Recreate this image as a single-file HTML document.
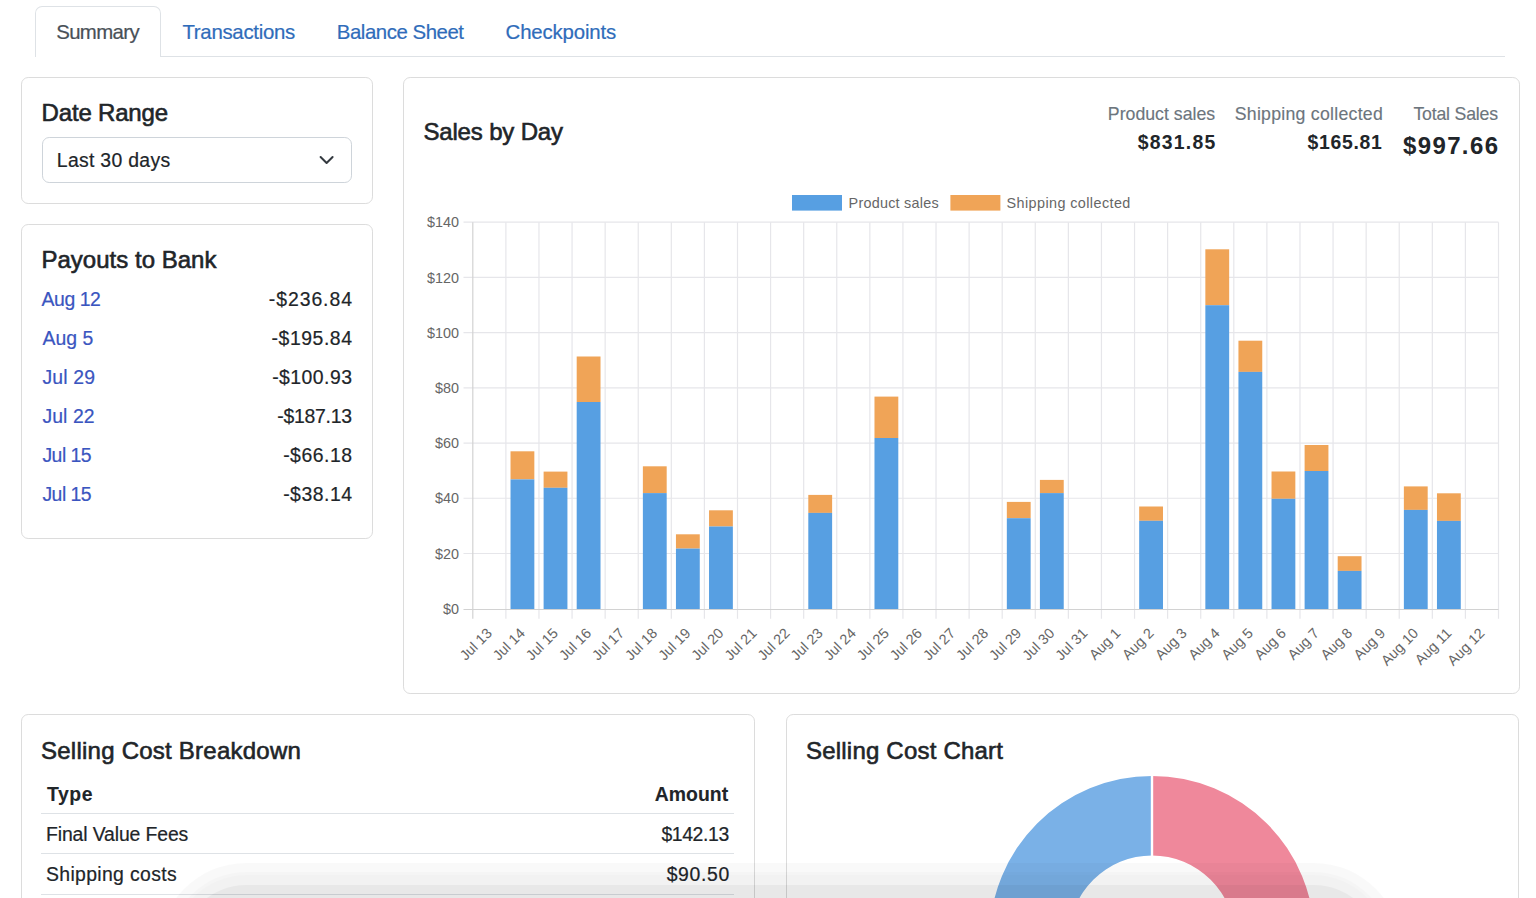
<!DOCTYPE html>
<html lang="en"><head><meta charset="utf-8"><title>Summary</title>
<style>
html,body{margin:0;padding:0;background:#fff;width:1536px;height:898px;overflow:hidden;position:relative;font-family:"Liberation Sans",sans-serif;}
.card{position:absolute;box-sizing:border-box;border:1.2px solid #dcdcdc;border-radius:7.2px;background:#fff;}
.navline{position:absolute;left:35px;top:55.6px;width:1470px;height:1.2px;background:#dee2e6;}
.tabact{position:absolute;left:35.4px;top:6px;width:125.4px;height:51px;box-sizing:border-box;border:1.2px solid #dee2e6;border-bottom:none;border-radius:7.2px 7.2px 0 0;background:#fff;}
.sel{position:absolute;left:41.5px;top:137px;width:310px;height:45.6px;box-sizing:border-box;border:1.2px solid #ced4da;border-radius:7.2px;}
.tline{position:absolute;left:40.9px;width:693.2px;height:1.2px;background:#dee2e6;}
svg.ov{position:absolute;left:0;top:0;}
.sh{position:absolute;height:300px;}
.yl,.xl{font-size:14.4px;fill:#666;font-family:"Liberation Sans",sans-serif;}
.tab{font-size:20.4px;fill:#2f6cba;stroke:#2f6cba;stroke-width:0.2px;font-family:"Liberation Sans",sans-serif;}
.tab.act{fill:#495057;stroke:#495057;}
.h5{font-size:24px;fill:#212529;stroke:#212529;stroke-width:0.6px;font-family:"Liberation Sans",sans-serif;}
.body{font-size:19.4px;fill:#212529;stroke:#212529;stroke-width:0.2px;font-family:"Liberation Sans",sans-serif;}
.b{font-weight:bold;stroke-width:0.1px;}
.lnk{fill:#3a55c0;stroke:#3a55c0;}
.muted{font-size:17.7px;fill:#6c757d;stroke:#6c757d;stroke-width:0.15px;font-family:"Liberation Sans",sans-serif;}
.stat{font-size:19.4px;font-weight:bold;fill:#212529;font-family:"Liberation Sans",sans-serif;}
.stat.big{font-size:24px;}
.leg{font-size:14.4px;fill:#666;font-family:"Liberation Sans",sans-serif;}

</style></head><body>
<nav class="navline"></nav>
<div class="tabact"></div>
<div class="card" style="left:20.6px;top:76.6px;width:352px;height:127px;"></div>
<div class="sel"></div>
<div class="card" style="left:20.6px;top:224px;width:352px;height:314.5px;"></div>
<div class="card" style="left:402.6px;top:76.6px;width:1117px;height:617px;"></div>
<div class="card" style="left:20.6px;top:714px;width:734.6px;height:300px;"></div>
<div class="card" style="left:785.6px;top:714px;width:733.6px;height:300px;"></div>
<div class="tline" style="top:813px;"></div>
<div class="tline" style="top:853.1px;"></div>
<div class="tline" style="top:893.9px;"></div>
<svg class="ov" width="1536" height="898" viewBox="0 0 1536 898">
<polyline points="320.6,157 326.6,163 332.6,157" fill="none" stroke="#343a40" stroke-width="2" stroke-linecap="round" stroke-linejoin="round"/>
<rect x="792" y="195" width="50" height="15.6" fill="#579fe2"/>
<rect x="950.4" y="195" width="50" height="15.6" fill="#f0a457"/>
<line x1="463.5" y1="553.49" x2="1498.5" y2="553.49" stroke="#e6e6ea" stroke-width="1.2"/>
<line x1="463.5" y1="498.27" x2="1498.5" y2="498.27" stroke="#e6e6ea" stroke-width="1.2"/>
<line x1="463.5" y1="443.06" x2="1498.5" y2="443.06" stroke="#e6e6ea" stroke-width="1.2"/>
<line x1="463.5" y1="387.84" x2="1498.5" y2="387.84" stroke="#e6e6ea" stroke-width="1.2"/>
<line x1="463.5" y1="332.63" x2="1498.5" y2="332.63" stroke="#e6e6ea" stroke-width="1.2"/>
<line x1="463.5" y1="277.41" x2="1498.5" y2="277.41" stroke="#e6e6ea" stroke-width="1.2"/>
<line x1="463.5" y1="222.20" x2="1498.5" y2="222.20" stroke="#e6e6ea" stroke-width="1.2"/>
<line x1="505.89" y1="222.2" x2="505.89" y2="618.7" stroke="#e6e6ea" stroke-width="1.2"/>
<line x1="538.97" y1="222.2" x2="538.97" y2="618.7" stroke="#e6e6ea" stroke-width="1.2"/>
<line x1="572.06" y1="222.2" x2="572.06" y2="618.7" stroke="#e6e6ea" stroke-width="1.2"/>
<line x1="605.15" y1="222.2" x2="605.15" y2="618.7" stroke="#e6e6ea" stroke-width="1.2"/>
<line x1="638.24" y1="222.2" x2="638.24" y2="618.7" stroke="#e6e6ea" stroke-width="1.2"/>
<line x1="671.32" y1="222.2" x2="671.32" y2="618.7" stroke="#e6e6ea" stroke-width="1.2"/>
<line x1="704.41" y1="222.2" x2="704.41" y2="618.7" stroke="#e6e6ea" stroke-width="1.2"/>
<line x1="737.50" y1="222.2" x2="737.50" y2="618.7" stroke="#e6e6ea" stroke-width="1.2"/>
<line x1="770.58" y1="222.2" x2="770.58" y2="618.7" stroke="#e6e6ea" stroke-width="1.2"/>
<line x1="803.67" y1="222.2" x2="803.67" y2="618.7" stroke="#e6e6ea" stroke-width="1.2"/>
<line x1="836.76" y1="222.2" x2="836.76" y2="618.7" stroke="#e6e6ea" stroke-width="1.2"/>
<line x1="869.85" y1="222.2" x2="869.85" y2="618.7" stroke="#e6e6ea" stroke-width="1.2"/>
<line x1="902.93" y1="222.2" x2="902.93" y2="618.7" stroke="#e6e6ea" stroke-width="1.2"/>
<line x1="936.02" y1="222.2" x2="936.02" y2="618.7" stroke="#e6e6ea" stroke-width="1.2"/>
<line x1="969.11" y1="222.2" x2="969.11" y2="618.7" stroke="#e6e6ea" stroke-width="1.2"/>
<line x1="1002.19" y1="222.2" x2="1002.19" y2="618.7" stroke="#e6e6ea" stroke-width="1.2"/>
<line x1="1035.28" y1="222.2" x2="1035.28" y2="618.7" stroke="#e6e6ea" stroke-width="1.2"/>
<line x1="1068.37" y1="222.2" x2="1068.37" y2="618.7" stroke="#e6e6ea" stroke-width="1.2"/>
<line x1="1101.45" y1="222.2" x2="1101.45" y2="618.7" stroke="#e6e6ea" stroke-width="1.2"/>
<line x1="1134.54" y1="222.2" x2="1134.54" y2="618.7" stroke="#e6e6ea" stroke-width="1.2"/>
<line x1="1167.63" y1="222.2" x2="1167.63" y2="618.7" stroke="#e6e6ea" stroke-width="1.2"/>
<line x1="1200.72" y1="222.2" x2="1200.72" y2="618.7" stroke="#e6e6ea" stroke-width="1.2"/>
<line x1="1233.80" y1="222.2" x2="1233.80" y2="618.7" stroke="#e6e6ea" stroke-width="1.2"/>
<line x1="1266.89" y1="222.2" x2="1266.89" y2="618.7" stroke="#e6e6ea" stroke-width="1.2"/>
<line x1="1299.98" y1="222.2" x2="1299.98" y2="618.7" stroke="#e6e6ea" stroke-width="1.2"/>
<line x1="1333.06" y1="222.2" x2="1333.06" y2="618.7" stroke="#e6e6ea" stroke-width="1.2"/>
<line x1="1366.15" y1="222.2" x2="1366.15" y2="618.7" stroke="#e6e6ea" stroke-width="1.2"/>
<line x1="1399.24" y1="222.2" x2="1399.24" y2="618.7" stroke="#e6e6ea" stroke-width="1.2"/>
<line x1="1432.33" y1="222.2" x2="1432.33" y2="618.7" stroke="#e6e6ea" stroke-width="1.2"/>
<line x1="1465.41" y1="222.2" x2="1465.41" y2="618.7" stroke="#e6e6ea" stroke-width="1.2"/>
<line x1="1498.50" y1="222.2" x2="1498.50" y2="618.7" stroke="#e6e6ea" stroke-width="1.2"/>
<line x1="472.80" y1="222.2" x2="472.80" y2="618.7" stroke="#d2d2d2" stroke-width="1.2"/>
<rect x="510.52" y="451.30" width="23.82" height="28.10" fill="#f0a457"/>
<rect x="510.52" y="479.40" width="23.82" height="129.60" fill="#579fe2"/>
<rect x="543.61" y="471.60" width="23.82" height="16.20" fill="#f0a457"/>
<rect x="543.61" y="487.80" width="23.82" height="121.20" fill="#579fe2"/>
<rect x="576.69" y="356.50" width="23.82" height="45.50" fill="#f0a457"/>
<rect x="576.69" y="402.00" width="23.82" height="207.00" fill="#579fe2"/>
<rect x="642.87" y="466.30" width="23.82" height="26.80" fill="#f0a457"/>
<rect x="642.87" y="493.10" width="23.82" height="115.90" fill="#579fe2"/>
<rect x="675.95" y="534.30" width="23.82" height="14.30" fill="#f0a457"/>
<rect x="675.95" y="548.60" width="23.82" height="60.40" fill="#579fe2"/>
<rect x="709.04" y="510.30" width="23.82" height="16.20" fill="#f0a457"/>
<rect x="709.04" y="526.50" width="23.82" height="82.50" fill="#579fe2"/>
<rect x="808.30" y="494.90" width="23.82" height="18.00" fill="#f0a457"/>
<rect x="808.30" y="512.90" width="23.82" height="96.10" fill="#579fe2"/>
<rect x="874.48" y="396.60" width="23.82" height="41.40" fill="#f0a457"/>
<rect x="874.48" y="438.00" width="23.82" height="171.00" fill="#579fe2"/>
<rect x="1006.83" y="501.90" width="23.82" height="16.30" fill="#f0a457"/>
<rect x="1006.83" y="518.20" width="23.82" height="90.80" fill="#579fe2"/>
<rect x="1039.91" y="479.90" width="23.82" height="13.20" fill="#f0a457"/>
<rect x="1039.91" y="493.10" width="23.82" height="115.90" fill="#579fe2"/>
<rect x="1139.17" y="506.50" width="23.82" height="14.30" fill="#f0a457"/>
<rect x="1139.17" y="520.80" width="23.82" height="88.20" fill="#579fe2"/>
<rect x="1205.35" y="249.30" width="23.82" height="55.90" fill="#f0a457"/>
<rect x="1205.35" y="305.20" width="23.82" height="303.80" fill="#579fe2"/>
<rect x="1238.44" y="340.70" width="23.82" height="31.20" fill="#f0a457"/>
<rect x="1238.44" y="371.90" width="23.82" height="237.10" fill="#579fe2"/>
<rect x="1271.52" y="471.50" width="23.82" height="27.30" fill="#f0a457"/>
<rect x="1271.52" y="498.80" width="23.82" height="110.20" fill="#579fe2"/>
<rect x="1304.61" y="445.00" width="23.82" height="26.00" fill="#f0a457"/>
<rect x="1304.61" y="471.00" width="23.82" height="138.00" fill="#579fe2"/>
<rect x="1337.70" y="556.20" width="23.82" height="14.70" fill="#f0a457"/>
<rect x="1337.70" y="570.90" width="23.82" height="38.10" fill="#579fe2"/>
<rect x="1403.87" y="486.40" width="23.82" height="23.50" fill="#f0a457"/>
<rect x="1403.87" y="509.90" width="23.82" height="99.10" fill="#579fe2"/>
<rect x="1436.96" y="493.30" width="23.82" height="27.60" fill="#f0a457"/>
<rect x="1436.96" y="520.90" width="23.82" height="88.10" fill="#579fe2"/>
<line x1="463.5" y1="609.5" x2="1498.5" y2="609.5" stroke="#d2d2d2" stroke-width="1.2"/>
<text x="459" y="613.80" text-anchor="end" class="yl">$0</text>
<text x="459" y="558.59" text-anchor="end" class="yl">$20</text>
<text x="459" y="503.37" text-anchor="end" class="yl">$40</text>
<text x="459" y="448.16" text-anchor="end" class="yl">$60</text>
<text x="459" y="392.94" text-anchor="end" class="yl">$80</text>
<text x="459" y="337.73" text-anchor="end" class="yl">$100</text>
<text x="459" y="282.51" text-anchor="end" class="yl">$120</text>
<text x="459" y="227.30" text-anchor="end" class="yl">$140</text>
<text transform="translate(492.84 634.2) rotate(-45)" text-anchor="end" class="xl">Jul 13</text>
<text transform="translate(525.93 634.2) rotate(-45)" text-anchor="end" class="xl">Jul 14</text>
<text transform="translate(559.02 634.2) rotate(-45)" text-anchor="end" class="xl">Jul 15</text>
<text transform="translate(592.10 634.2) rotate(-45)" text-anchor="end" class="xl">Jul 16</text>
<text transform="translate(625.19 634.2) rotate(-45)" text-anchor="end" class="xl">Jul 17</text>
<text transform="translate(658.28 634.2) rotate(-45)" text-anchor="end" class="xl">Jul 18</text>
<text transform="translate(691.37 634.2) rotate(-45)" text-anchor="end" class="xl">Jul 19</text>
<text transform="translate(724.45 634.2) rotate(-45)" text-anchor="end" class="xl">Jul 20</text>
<text transform="translate(757.54 634.2) rotate(-45)" text-anchor="end" class="xl">Jul 21</text>
<text transform="translate(790.63 634.2) rotate(-45)" text-anchor="end" class="xl">Jul 22</text>
<text transform="translate(823.71 634.2) rotate(-45)" text-anchor="end" class="xl">Jul 23</text>
<text transform="translate(856.80 634.2) rotate(-45)" text-anchor="end" class="xl">Jul 24</text>
<text transform="translate(889.89 634.2) rotate(-45)" text-anchor="end" class="xl">Jul 25</text>
<text transform="translate(922.98 634.2) rotate(-45)" text-anchor="end" class="xl">Jul 26</text>
<text transform="translate(956.06 634.2) rotate(-45)" text-anchor="end" class="xl">Jul 27</text>
<text transform="translate(989.15 634.2) rotate(-45)" text-anchor="end" class="xl">Jul 28</text>
<text transform="translate(1022.24 634.2) rotate(-45)" text-anchor="end" class="xl">Jul 29</text>
<text transform="translate(1055.32 634.2) rotate(-45)" text-anchor="end" class="xl">Jul 30</text>
<text transform="translate(1088.41 634.2) rotate(-45)" text-anchor="end" class="xl">Jul 31</text>
<text transform="translate(1121.50 634.2) rotate(-45)" text-anchor="end" class="xl">Aug 1</text>
<text transform="translate(1154.59 634.2) rotate(-45)" text-anchor="end" class="xl">Aug 2</text>
<text transform="translate(1187.67 634.2) rotate(-45)" text-anchor="end" class="xl">Aug 3</text>
<text transform="translate(1220.76 634.2) rotate(-45)" text-anchor="end" class="xl">Aug 4</text>
<text transform="translate(1253.85 634.2) rotate(-45)" text-anchor="end" class="xl">Aug 5</text>
<text transform="translate(1286.93 634.2) rotate(-45)" text-anchor="end" class="xl">Aug 6</text>
<text transform="translate(1320.02 634.2) rotate(-45)" text-anchor="end" class="xl">Aug 7</text>
<text transform="translate(1353.11 634.2) rotate(-45)" text-anchor="end" class="xl">Aug 8</text>
<text transform="translate(1386.20 634.2) rotate(-45)" text-anchor="end" class="xl">Aug 9</text>
<text transform="translate(1419.28 634.2) rotate(-45)" text-anchor="end" class="xl">Aug 10</text>
<text transform="translate(1452.37 634.2) rotate(-45)" text-anchor="end" class="xl">Aug 11</text>
<text transform="translate(1485.46 634.2) rotate(-45)" text-anchor="end" class="xl">Aug 12</text>
<path d="M1152 775.9 A162.5 162.5 0 0 0 1152 1100.9 L1152 1021.4 A83 83 0 0 1 1152 855.4 Z" fill="#7ab1e7"/>
<path d="M1152 775.9 A162.5 162.5 0 0 1 1152 1100.9 L1152 1021.4 A83 83 0 0 0 1152 855.4 Z" fill="#ef889b"/>
<line x1="1152" y1="770" x2="1152" y2="860" stroke="#fff" stroke-width="2.4"/>
<text x="56.20" y="38.8" class="tab act" text-anchor="start" textLength="83.45" lengthAdjust="spacing">Summary</text>
<text x="182.40" y="38.8" class="tab" text-anchor="start" textLength="112.88" lengthAdjust="spacing">Transactions</text>
<text x="336.80" y="38.8" class="tab" text-anchor="start" textLength="127.24" lengthAdjust="spacing">Balance Sheet</text>
<text x="505.60" y="38.8" class="tab" text-anchor="start" textLength="110.62" lengthAdjust="spacing">Checkpoints</text>
<text x="41.60" y="121.4" class="h5" text-anchor="start" textLength="126.39" lengthAdjust="spacing">Date Range</text>
<text x="56.80" y="166.8" class="body" text-anchor="start" textLength="113.35" lengthAdjust="spacing">Last 30 days</text>
<text x="41.40" y="268.2" class="h5" text-anchor="start" textLength="175.08" lengthAdjust="spacing">Payouts to Bank</text>
<text x="41.60" y="305.7" class="body lnk" text-anchor="start" textLength="59.27" lengthAdjust="spacing">Aug 12</text>
<text x="42.40" y="344.7" class="body lnk" text-anchor="start" textLength="50.89" lengthAdjust="spacing">Aug 5</text>
<text x="42.40" y="383.8" class="body lnk" text-anchor="start" textLength="52.55" lengthAdjust="spacing">Jul 29</text>
<text x="42.40" y="422.8" class="body lnk" text-anchor="start" textLength="52.15" lengthAdjust="spacing">Jul 22</text>
<text x="42.40" y="461.8" class="body lnk" text-anchor="start" textLength="49.25" lengthAdjust="spacing">Jul 15</text>
<text x="42.40" y="500.8" class="body lnk" text-anchor="start" textLength="49.25" lengthAdjust="spacing">Jul 15</text>
<text x="352.00" y="305.7" class="body" text-anchor="end" textLength="83.26" lengthAdjust="spacing">-$236.84</text>
<text x="352.00" y="344.7" class="body" text-anchor="end" textLength="80.46" lengthAdjust="spacing">-$195.84</text>
<text x="352.00" y="383.8" class="body" text-anchor="end" textLength="79.86" lengthAdjust="spacing">-$100.93</text>
<text x="352.00" y="422.8" class="body" text-anchor="end" textLength="74.66" lengthAdjust="spacing">-$187.13</text>
<text x="352.00" y="461.8" class="body" text-anchor="end" textLength="68.87" lengthAdjust="spacing">-$66.18</text>
<text x="352.00" y="500.8" class="body" text-anchor="end" textLength="68.87" lengthAdjust="spacing">-$38.14</text>
<text x="423.40" y="139.7" class="h5" text-anchor="start" textLength="139.61" lengthAdjust="spacing">Sales by Day</text>
<text x="1215.20" y="119.5" class="muted" text-anchor="end" textLength="107.37" lengthAdjust="spacing">Product sales</text>
<text x="1215.20" y="148.7" class="stat" text-anchor="end" textLength="77.49" lengthAdjust="spacing">$831.85</text>
<text x="1382.80" y="119.5" class="muted" text-anchor="end" textLength="148.08" lengthAdjust="spacing">Shipping collected</text>
<text x="1381.80" y="148.7" class="stat" text-anchor="end" textLength="74.39" lengthAdjust="spacing">$165.81</text>
<text x="1498.00" y="119.5" class="muted" text-anchor="end" textLength="84.53" lengthAdjust="spacing">Total Sales</text>
<text x="1498.00" y="154.4" class="stat big" text-anchor="end" textLength="95.07" lengthAdjust="spacing">$997.66</text>
<text x="848.60" y="207.5" class="leg" text-anchor="start" textLength="89.99" lengthAdjust="spacing">Product sales</text>
<text x="1006.60" y="207.5" class="leg" text-anchor="start" textLength="123.71" lengthAdjust="spacing">Shipping collected</text>
<text x="41.00" y="758.9" class="h5" text-anchor="start" textLength="259.81" lengthAdjust="spacing">Selling Cost Breakdown</text>
<text x="47.00" y="801.0" class="body b" text-anchor="start" textLength="45.53" lengthAdjust="spacing">Type</text>
<text x="728.20" y="801.0" class="body b" text-anchor="end" textLength="73.45" lengthAdjust="spacing">Amount</text>
<text x="46.00" y="840.7" class="body" text-anchor="start" textLength="142.28" lengthAdjust="spacing">Final Value Fees</text>
<text x="729.20" y="840.7" class="body" text-anchor="end" textLength="67.79" lengthAdjust="spacing">$142.13</text>
<text x="46.00" y="881.3" class="body" text-anchor="start" textLength="130.62" lengthAdjust="spacing">Shipping costs</text>
<text x="729.20" y="881.3" class="body" text-anchor="end" textLength="62.51" lengthAdjust="spacing">$90.50</text>
<text x="806.00" y="758.7" class="h5" text-anchor="start" textLength="196.92" lengthAdjust="spacing">Selling Cost Chart</text>
</svg>
<div class="sh" style="left:159.2px;top:862.5px;width:1241.6px;border-radius:86.8px;background:rgba(0,0,0,0.022);"></div>
<div class="sh" style="left:169.0px;top:872.3px;width:1222.0px;border-radius:77.0px;background:rgba(0,0,0,0.016);"></div>
<div class="sh" style="left:172.0px;top:875.3px;width:1216.0px;border-radius:74.0px;background:rgba(0,0,0,0.012);"></div>
<div class="sh" style="left:181.2px;top:884.5px;width:1197.6px;border-radius:64.8px;background:rgba(0,0,0,0.04);"></div>
</body></html>
